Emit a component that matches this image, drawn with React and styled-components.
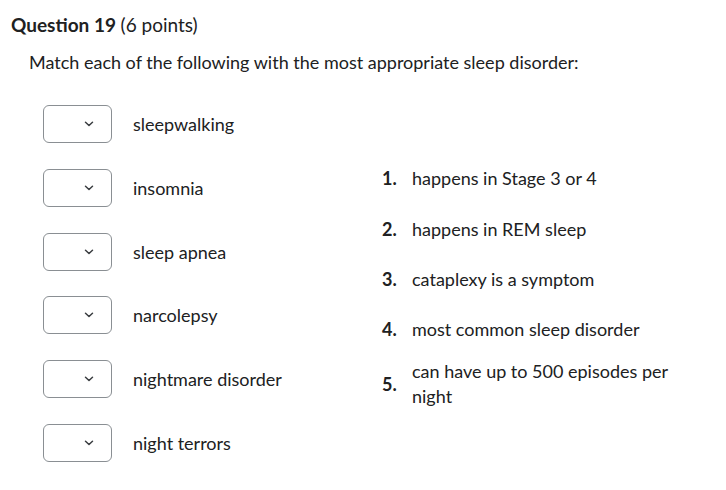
import styled, { createGlobalStyle } from 'styled-components';

const GlobalStyle = createGlobalStyle`
  body {
    margin: 0;
    background: #fff;
    font-family: Lato, "Open Sans", sans-serif;
    color: #202122;
  }
`;

const QuestionWrap = styled.div`
  padding: 12px 0 0 11px;
`;

const QuestionTitle = styled.h2`
  margin: 0;
  font-size: 19px;
  line-height: 26px;
  font-weight: 700;
  span {
    font-weight: 400;
  }
`;

const Prompt = styled.p`
  margin: 11px 0 0 18px;
  font-size: 18px;
  line-height: 26px;
`;

const MatchArea = styled.div`
  display: flex;
  align-items: center;
  margin: 30px 0 0 32px;
`;

const ChoiceList = styled.div`
  display: flex;
  flex-direction: column;
  gap: 25.8px;
  width: 339px;
`;

const ChoiceRow = styled.div`
  display: flex;
  align-items: center;
  gap: 21px;
  font-size: 18px;
`;

const SelectBox = styled.div`
  box-sizing: border-box;
  width: 69px;
  height: 38px;
  border: 1px solid #8a8f93;
  border-radius: 6px;
  background: #fff;
  display: flex;
  align-items: center;
  justify-content: flex-end;
  padding-right: 17px;
`;

const OptionList = styled.ol`
  list-style: none;
  margin: 0;
  padding: 0;
  display: flex;
  flex-direction: column;
  gap: 8.3px;
  width: 300px;
`;

const OptionItem = styled.li`
  display: flex;
  align-items: center;
  min-height: 42px;
  font-size: 18px;
  line-height: 25px;
`;

const OptionNum = styled.span`
  font-weight: 700;
  width: 30px;
  flex-shrink: 0;
`;

const Chevron = () => (
  <svg width="10" height="6" viewBox="0 0 10 6">
    <path d="M1.5 1.2 L5 4.5 L8.5 1.2" fill="none" stroke="#3a3d40" strokeWidth="1.5" strokeLinecap="round" strokeLinejoin="round" />
  </svg>
);

const choices = ['sleepwalking', 'insomnia', 'sleep apnea', 'narcolepsy', 'nightmare disorder', 'night terrors'];
const options = [
  'happens in Stage 3 or 4',
  'happens in REM sleep',
  'cataplexy is a symptom',
  'most common sleep disorder',
  'can have up to 500 episodes per night',
];

export default function App() {
  return (
    <>
      <GlobalStyle />
      <QuestionWrap>
        <QuestionTitle>
          Question 19 <span>(6 points)</span>
        </QuestionTitle>
        <Prompt>Match each of the following with the most appropriate sleep disorder:</Prompt>
        <MatchArea>
          <ChoiceList>
            {choices.map((c) => (
              <ChoiceRow key={c}>
                <SelectBox>
                  <Chevron />
                </SelectBox>
                {c}
              </ChoiceRow>
            ))}
          </ChoiceList>
          <OptionList>
            {options.map((o, i) => (
              <OptionItem key={o}>
                <OptionNum>{i + 1}.</OptionNum>
                <span>{o}</span>
              </OptionItem>
            ))}
          </OptionList>
        </MatchArea>
      </QuestionWrap>
    </>
  );
}
